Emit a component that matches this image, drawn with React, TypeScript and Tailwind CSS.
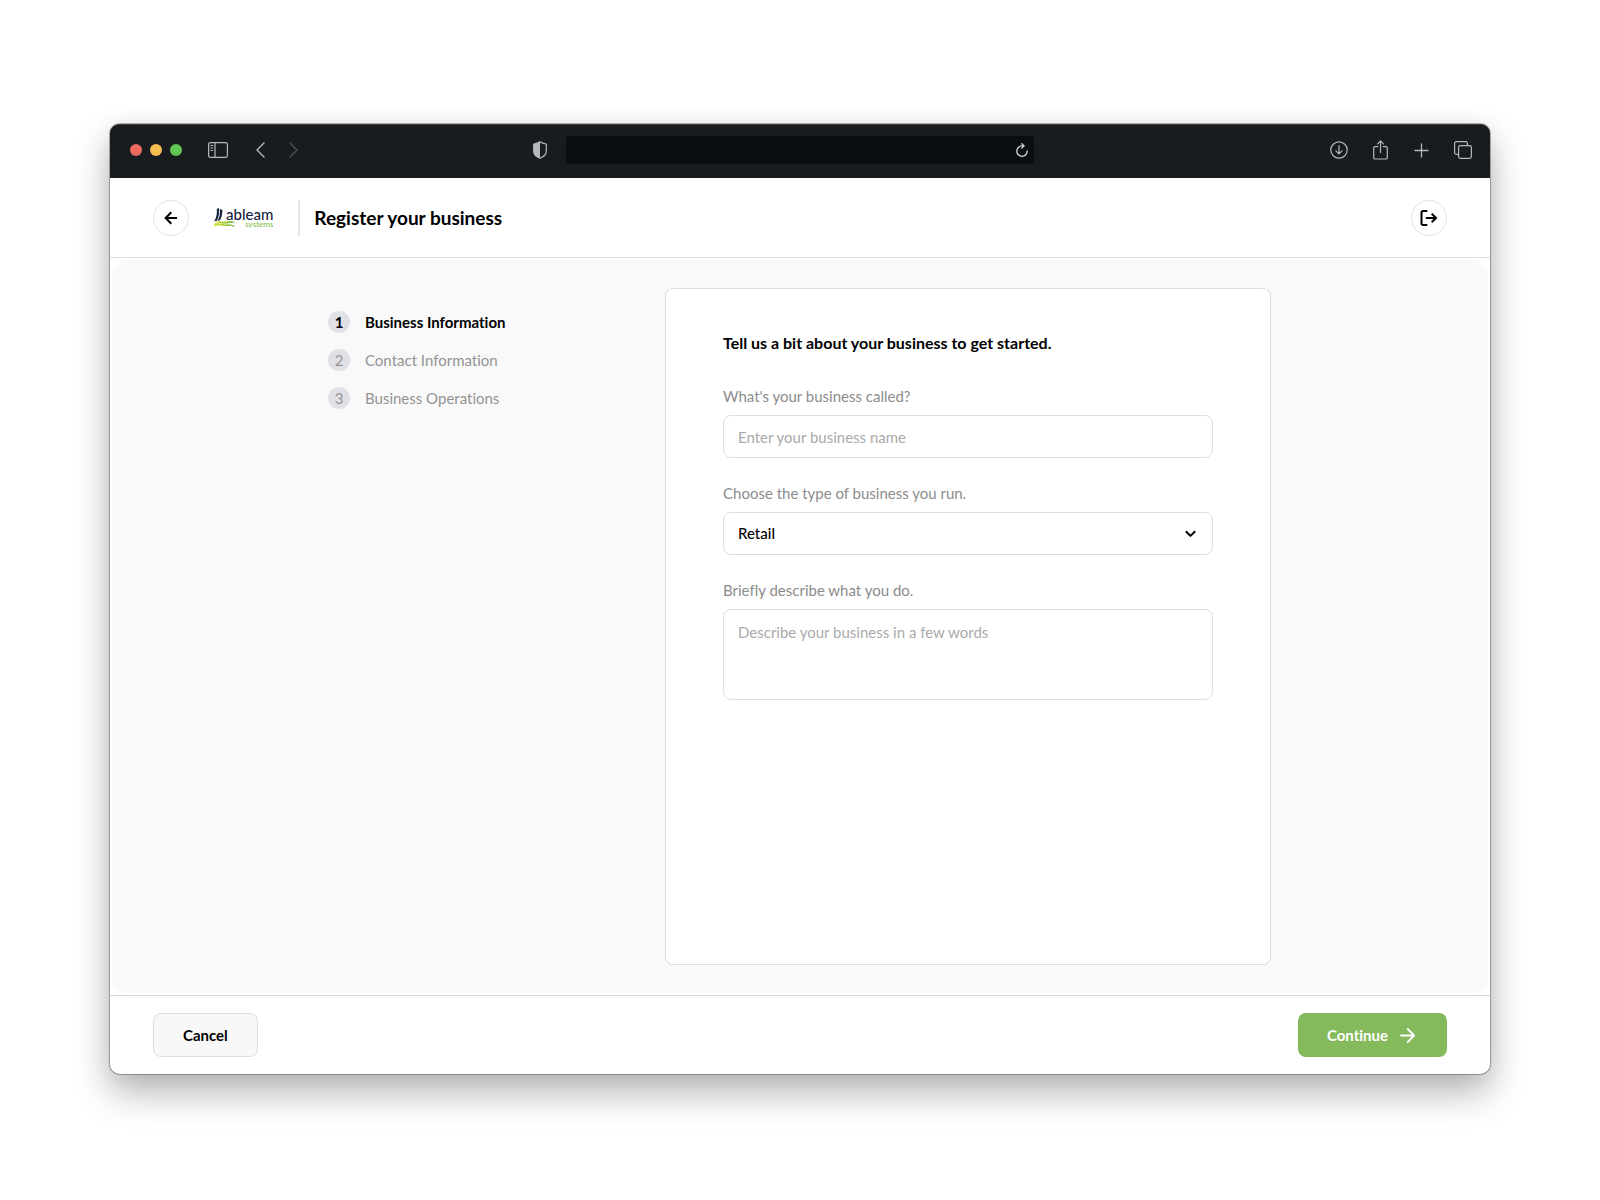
import React from "react";

const steps = ["Business Information", "Contact Information", "Business Operations"];

const fieldBox =
  "w-full rounded-lg border border-[#dcdde4] bg-white px-3.5 text-[15px] text-black outline-none placeholder:text-[#aaaaaa] focus:border-[#84ba5b]";

function TitleBar() {
  return (
    <div className="grid h-[54px] grid-cols-[1fr_minmax(0,468px)_1fr] items-center rounded-t-[9px] border-t border-[#3b3d3f] bg-[#191c1f] pb-[3px] text-[#b6b9bb]">
      <div className="flex items-center pl-5">
        <div className="flex gap-2">
          <span className="size-3 rounded-full bg-[#ed6a5e]" />
          <span className="size-3 rounded-full bg-[#f5bf4f]" />
          <span className="size-3 rounded-full bg-[#61c554]" />
        </div>
        <button type="button" aria-label="Sidebar" className="ml-[26px]">
          <svg width="20" height="16" viewBox="0 0 20 16" fill="none" stroke="currentColor">
            <rect x="0.6" y="0.6" width="18.8" height="14.8" rx="1.8" strokeWidth="1.2" />
            <path d="M7 .6v14.8" strokeWidth="1.2" />
            <path d="M2.4 3.5h2.8M2.4 5.9h2.8M2.4 8.3h2.8" strokeWidth="1" />
          </svg>
        </button>
        <button type="button" aria-label="Previous page" className="ml-7">
          <svg width="9" height="16" viewBox="0 0 9 16" fill="none" stroke="currentColor" strokeWidth="1.4" strokeLinecap="round" strokeLinejoin="round">
            <path d="M8 1 1 8l7 7" />
          </svg>
        </button>
        <button type="button" aria-label="Next page" className="ml-6 text-[#4c4f52]">
          <svg width="9" height="16" viewBox="0 0 9 16" fill="none" stroke="currentColor" strokeWidth="1.4" strokeLinecap="round" strokeLinejoin="round">
            <path d="m1 1 7 7-7 7" />
          </svg>
        </button>
        <button type="button" aria-label="Privacy report" className="mr-[19px] ml-auto">
          <svg width="14" height="18" viewBox="0 0 14 18" fill="none">
            <path d="M7 .8C8.6 2 10.8 2.7 13.3 3v7.2c0 3.2-2.5 5.4-6.3 7-3.8-1.600-6.3-3.8-6.3-7V3C3.2 2.7 5.4 2 7 .8Z" stroke="currentColor" strokeWidth="1.2" strokeLinejoin="round" />
            <path d="M7 .8C5.4 2 3.2 2.7.7 3v7.2c0 3.2 2.5 5.4 6.3 7Z" fill="currentColor" />
          </svg>
        </button>
      </div>
      <div className="flex h-7 items-center rounded bg-[#0a0e10] pr-1.5">
        <input aria-label="Address" className="h-full min-w-0 flex-1 bg-transparent px-3 text-sm text-white outline-none" />
        <button type="button" aria-label="Reload" className="text-[#d8dadb]">
          <svg width="12" height="14" viewBox="0 0 12 14" fill="none" stroke="currentColor" strokeWidth="1.3" strokeLinecap="round" strokeLinejoin="round">
            <path d="M11.2 8A5.200 5.200 0 1 1 6 2.900h1.800" />
            <path d="M5.8.7 8 2.900 5.800 5.100" />
          </svg>
        </button>
      </div>
      <div className="flex items-center justify-end pr-[18px]">
        <button type="button" aria-label="Downloads">
          <svg width="18" height="18" viewBox="0 0 18 18" fill="none" stroke="currentColor" strokeWidth="1.2" strokeLinecap="round" strokeLinejoin="round">
            <circle cx="9" cy="9" r="8.2" />
            <path d="M9 4.800v8M5.900 9.800 9 12.900l3.100-3.100" />
          </svg>
        </button>
        <button type="button" aria-label="Share" className="ml-[25px]">
          <svg width="15" height="20" viewBox="0 0 15 20" fill="none" stroke="currentColor" strokeWidth="1.2" strokeLinecap="round" strokeLinejoin="round">
            <path d="M4.800 6.600H2A1.300 1.300 0 0 0 .7 7.900v9.800A1.300 1.300 0 0 0 2 19h11a1.300 1.300 0 0 0 1.300-1.300V7.900A1.300 1.300 0 0 0 13 6.600h-2.800" />
            <path d="M7.500 12.500V1M4.600 3.800 7.500.9l2.900 2.900" />
          </svg>
        </button>
        <button type="button" aria-label="New tab" className="ml-[26px]">
          <svg width="15" height="15" viewBox="0 0 15 15" fill="none" stroke="currentColor" strokeWidth="1.3" strokeLinecap="round">
            <path d="M7.500 1v13M1 7.500h13" />
          </svg>
        </button>
        <button type="button" aria-label="Tab overview" className="ml-[25px]">
          <svg width="18" height="18" viewBox="0 0 18 18" fill="none" stroke="currentColor" strokeWidth="1.2" strokeLinejoin="round">
            <rect x="4.6" y="4.6" width="12.8" height="12.8" rx="1.8" />
            <path d="M4.600 13.400H2.400A1.800 1.800 0 0 1 .6 11.600V2.400A1.800 1.800 0 0 1 2.400.6h9.200a1.800 1.800 0 0 1 1.800 1.800v2.200" />
          </svg>
        </button>
      </div>
    </div>
  );
}

function Logo() {
  return (
    <div className="flex items-start" role="img" aria-label="ableam systems">
      <svg width="22" height="20" viewBox="0 0 22 20" className="mt-px -mr-2.5">
        <defs>
          <linearGradient id="leaf" x1="0" x2="1">
            <stop offset="0" stopColor="#e3e33c" />
            <stop offset="1" stopColor="#6cb83c" />
          </linearGradient>
        </defs>
        <path d="M2.800.9 5 .1C5.500 5 4.600 9.600 2.900 12.700L.2 13.300C2.500 9.600 3.200 5.400 2.800.9Z" fill="#16233d" />
        <path d="M5.900 1 8.400 2C8.400 6.600 7.300 10.400 5.600 12.600L3.500 12.700C5.500 9.600 6.300 5.600 5.900 1Z" fill="#16233d" />
        <path d="M.4 14.400C6 11.600 9.500 14.500 14 13.300c3-.6 5.600-.1 7 1.700-5-.9-7.200 1-11.500.8C6 15.600 4 13.900.4 14.600Z" fill="url(#leaf)" />
        <path d="M.2 15.800C6 14.100 9 17 13.500 16.300c3.500-.3 6 .5 7.900 3.300-4-2.200-6.900-1.300-10.200-1.500C7 18 5 16.600.1 18.500Z" fill="url(#leaf)" />
      </svg>
      <div className="flex flex-col items-end" aria-hidden="true">
        <span className="text-[15px] leading-[14px] font-medium text-[#16233d]">ableam</span>
        <span className="text-[8px] leading-[7px] font-medium text-[#7fc04a]">systems</span>
      </div>
    </div>
  );
}

function Header() {
  return (
    <header className="flex h-20 items-center border-b border-[#dcdee0] px-[43px]">
      <button type="button" aria-label="Back" className="flex size-9 items-center justify-center rounded-full border border-[#e3e3e8] bg-white">
        <svg width="14" height="14" viewBox="0 0 14 14" fill="none" stroke="#000" strokeWidth="2">
          <path d="M13 7H1.800M7.300 1.200 1.600 7l5.700 5.800" />
        </svg>
      </button>
      <div className="ml-[25px] flex items-center">
        <Logo />
      </div>
      <span className="ml-[25px] h-9 w-0.5 bg-[#e3e4e8]" />
      <h1 className="ml-3.5 text-[19px] leading-6 font-bold text-black">Register your business</h1>
      <button type="button" aria-label="Log out" className="ml-auto flex size-9 items-center justify-center rounded-full border border-[#e3e3e8] bg-white">
        <svg width="18" height="16" viewBox="0 0 18 16" fill="none" stroke="#000" strokeWidth="2">
          <path d="M7.300 1H3.200C2 1 1.500 1.600 1.500 2.700v10.600c0 1.100.5 1.700 1.700 1.700h4.100" />
          <path d="M5.800 8h10M11.700 3.700 16 8l-4.300 4.300" />
        </svg>
      </button>
    </header>
  );
}

function Steps() {
  return (
    <ol className="flex flex-col gap-4 pt-[23px]">
      {steps.map((label, i) => (
        <li
          key={label}
          className={
            i === 0
              ? "flex items-center gap-[15px] text-[15px] leading-[22px] font-bold text-black"
              : "flex items-center gap-[15px] text-[15px] leading-[22px] text-[#949494]"
          }
        >
          <span className="flex size-[22px] items-center justify-center rounded-full bg-[#e0e1e6]">{i + 1}</span>
          {label}
        </li>
      ))}
    </ol>
  );
}

function BusinessForm() {
  return (
    <form id="business" className="w-full max-w-[606px] rounded-lg border border-[#dcdde4] bg-white px-[57px] pt-[43px] pb-[264px]">
      <h2 className="text-[16px] leading-[22px] font-bold text-black">Tell us a bit about your business to get started.</h2>
      <div className="mt-[30px]">
        <label htmlFor="name" className="block text-[15px] leading-6 text-[#8c8c8c]">
          What's your business called?
        </label>
        <input id="name" placeholder="Enter your business name" className={`mt-[7px] block h-[43px] ${fieldBox}`} />
      </div>
      <div className="mt-[23px]">
        <label htmlFor="type" className="block text-[15px] leading-6 text-[#8c8c8c]">
          Choose the type of business you run.
        </label>
        <div className="relative mt-[7px]">
          <select id="type" defaultValue="Retail" className={`block h-[43px] appearance-none font-medium ${fieldBox}`}>
            <option>Retail</option>
            <option>Services</option>
            <option>Hospitality</option>
          </select>
          <svg className="pointer-events-none absolute top-[18px] right-[17px]" width="11" height="8" viewBox="0 0 11 8" fill="none" stroke="#000" strokeWidth="2" strokeLinejoin="round">
            <path d="m.8 1.200 4.700 4.700 4.700-4.700" />
          </svg>
        </div>
      </div>
      <div className="mt-[23px]">
        <label htmlFor="about" className="block text-[15px] leading-6 text-[#8c8c8c]">
          Briefly describe what you do.
        </label>
        <textarea id="about" placeholder="Describe your business in a few words" className={`mt-[7px] block h-[91px] resize-none py-2.5 leading-6 ${fieldBox}`} />
      </div>
    </form>
  );
}

export default function App() {
  return (
    <div className="min-h-screen bg-white px-6 pt-[124px] pb-[125px] font-['Lato',sans-serif] [font-variant-ligatures:none] sm:px-[110px]">
      <div className="rounded-[10px] bg-white shadow-[0_0_0_1px_rgba(0,0,0,0.28),0_18px_36px_rgba(0,0,0,0.3),0_0_20px_rgba(0,0,0,0.06)]">
        <TitleBar />
        <Header />
        <main className="p-0.5">
          <div className="rounded-2xl bg-[#f9f9f9] py-7 pr-[25px] pl-6">
            <div className="mx-auto flex max-w-[943px] justify-between gap-8">
              <Steps />
              <BusinessForm />
            </div>
          </div>
        </main>
        <footer className="flex h-[79px] items-center justify-between border-t border-[#d6d8da] px-[43px]">
          <button type="button" className="h-11 rounded-lg border border-[#dcdde4] bg-[#f8f8f8] px-[29px] text-[15px] font-bold text-black">
            Cancel
          </button>
          <button type="submit" form="business" className="flex h-11 items-center gap-3 rounded-lg bg-[#84ba5b] pr-8 pl-[29px] text-[15px] font-bold text-white">
            Continue
            <svg width="15" height="15" viewBox="0 0 15 15" fill="none" stroke="currentColor" strokeWidth="1.8" strokeLinecap="round" strokeLinejoin="round">
              <path d="M1 7.500h13M7.700 1l6.500 6.500L7.700 14" />
            </svg>
          </button>
        </footer>
      </div>
    </div>
  );
}
